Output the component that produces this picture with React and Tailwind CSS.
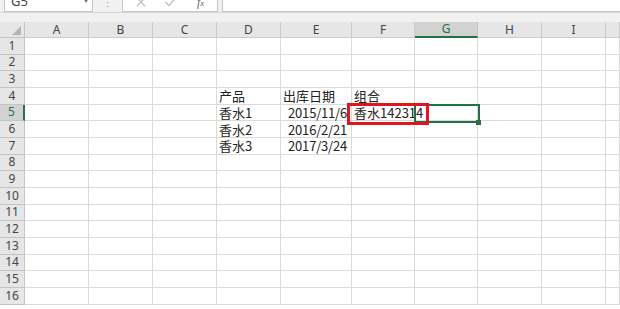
import React from "react";

const cols = ["A", "B", "C", "D", "E", "F", "G", "H", "I", ""];

const cells = {
  "4-D": { text: "产品" },
  "4-E": { text: "出库日期" },
  "4-F": { text: "组合" },
  "5-D": { text: "香水1" },
  "5-E": { text: "2015/11/6", right: true },
  "5-F": { text: "香水142314" },
  "6-D": { text: "香水2" },
  "6-E": { text: "2016/2/21", right: true },
  "7-D": { text: "香水3" },
  "7-E": { text: "2017/3/24", right: true },
};

const cjk = { fontFamily: '"Noto Sans CJK SC", "Noto Sans", sans-serif' };
const hdr = { fontFamily: '"Noto Sans", "Liberation Sans", sans-serif' };

function TopBar() {
  return (
    <div className="h-[13px] flex bg-[#f1f1f1] border-b border-[#d6d6d6] overflow-hidden">
      <div className="ml-[4px] w-[89px] bg-white border-x border-b border-[#c6c6c6] relative overflow-hidden">
        <span className="absolute left-[6px] -top-[8px] text-[13px] text-[#444]" style={hdr}>G5</span>
        <span className="absolute right-[4px] -top-[6px] text-[8px] text-[#666]">▾</span>
      </div>
      <div className="w-[29px] flex justify-center">
        <span className="text-[11px] leading-none text-[#999] -mt-[3px]">⋮</span>
      </div>
      <div className="w-[96px] bg-white border-x border-b border-[#c6c6c6] relative overflow-hidden">
        <svg className="absolute left-[12px] -top-[4px]" width="12" height="12" viewBox="0 0 12 12">
          <path d="M2 2 L10 10 M10 2 L2 10" stroke="#c0c0c0" strokeWidth="1.3" fill="none" />
        </svg>
        <svg className="absolute left-[41px] -top-[4px]" width="13" height="12" viewBox="0 0 13 12">
          <path d="M1.5 6 L5 9.5 L11.5 2" stroke="#c0c0c0" strokeWidth="1.4" fill="none" />
        </svg>
        <span className="absolute left-[74px] -top-[7px] text-[12px] italic text-[#666]" style={{ fontFamily: '"Liberation Serif", serif' }}>
          f<span className="text-[9px]">x</span>
        </span>
      </div>
      <div className="ml-[4px] flex-1 bg-white border-l border-b border-[#c6c6c6]" />
    </div>
  );
}

function Grid() {
  const rows = Array.from({ length: 16 }, (_, i) => i + 1);
  return (
    <div className="relative">
      <div className="grid grid-cols-[25px_64px_64px_64px_64px_71px_63px_63px_64px_64px_1fr] grid-rows-[16px_repeat(16,16.667px)]">
        <div className="bg-[#e6e6e6] border-r border-b border-[#c4c4c4] relative">
          <svg className="absolute right-[3px] bottom-[2px]" width="9" height="9" viewBox="0 0 9 9">
            <polygon points="9,0 9,9 0,9" fill="#b5b5b5" />
          </svg>
        </div>
        {cols.map((c, i) => (
          <div
            key={"h" + i}
            className={
              c === "G"
                ? "bg-[#d2d2d2] border-r border-[#c4c4c4] border-b-2 border-b-[#217346] text-[#217346] flex items-center justify-center text-[12px]"
                : "bg-[#e6e6e6] border-r border-b border-[#cbcbcb] text-[#444] flex items-center justify-center text-[12px]"
            }
            style={hdr}
          >
            {c}
          </div>
        ))}
        {rows.map((r) => (
          <React.Fragment key={r}>
            <div
              className={
                r === 5
                  ? "bg-[#d2d2d2] border-r-2 border-[#217346] border-b border-b-[#c4c4c4] text-[#217346] flex items-center justify-center text-[12px]"
                  : "bg-[#e6e6e6] border-r border-b border-[#c4c4c4] text-[#444] flex items-center justify-center text-[12px]"
              }
              style={hdr}
            >
              {r}
            </div>
            {cols.map((c, i) => {
              const cell = cells[r + "-" + c];
              return (
                <div
                  key={c + i}
                  className={
                    "border-r border-b border-[#dadada] flex items-center whitespace-nowrap text-[13px] text-[#222] " +
                    (cell && cell.right ? "justify-end pr-[4px] tracking-[-0.2px]" : "pl-[2px]")
                  }
                  style={cjk}
                >
                  {cell ? <span className="leading-none">{cell.text}</span> : null}
                </div>
              );
            })}
          </React.Fragment>
        ))}
      </div>
      <div className="absolute left-[414px] top-[82px] w-[66px] h-[19px] border-2 border-[#217346]" />
      <div className="absolute left-[476px] top-[98px] w-[5px] h-[5px] bg-[#217346]" />
      <div className="absolute left-[347px] top-[81px] w-[82px] h-[22px] border-[3px] border-[#e3141c]" />
    </div>
  );
}

export default function App() {
  return (
    <div className="w-[620px] h-[309px] overflow-hidden bg-white">
      <TopBar />
      <div className="h-[9px] bg-[#f1f1f1]" />
      <Grid />
    </div>
  );
}
